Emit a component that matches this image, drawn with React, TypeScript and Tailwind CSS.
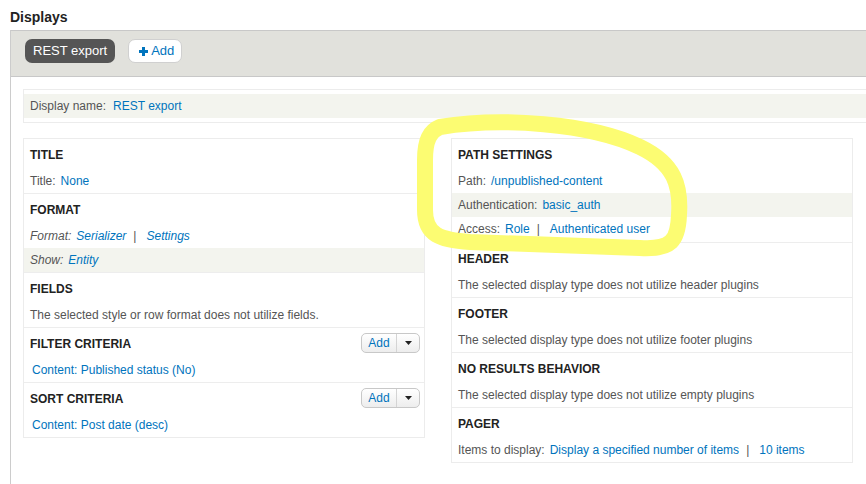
import React from 'react';

const font = { fontFamily: '"Liberation Sans", Arial, sans-serif' };

const Label = ({ children, italic }: { children: React.ReactNode; italic?: boolean }) => (
  <span className={`text-[#555] ${italic ? 'italic' : ''}`}>{children}</span>
);

const Link = ({ children, className = '' }: { children: React.ReactNode; className?: string }) => (
  <a className={`text-[#0074bd] ${className}`}>{children}</a>
);

const Sep = () => <span className="ml-[7px] text-[#555]">|</span>;

const DropButton = () => (
  <div className="flex h-[20px] items-stretch rounded-[5px] border border-[#c8c8c8] bg-gradient-to-b from-white to-[#ededed] text-[12px]">
    <span className="flex w-[34px] items-center justify-center text-[#0074bd]">Add</span>
    <span className="flex w-[23px] items-center justify-center border-l border-[#d4d4d4]">
      <svg width="7" height="4" viewBox="0 0 7 4">
        <path d="M0 0 L7 0 L3.5 4 Z" fill="#222" />
      </svg>
    </span>
  </div>
);

const Section = ({
  title,
  action,
  first,
  extraPad,
  children,
}: {
  title: string;
  action?: React.ReactNode;
  first?: boolean;
  extraPad?: boolean;
  children: React.ReactNode;
}) => (
  <div className={`${first ? '' : 'border-t border-[#ededed]'} ${extraPad ? 'pb-[1px]' : ''}`}>
    <div className="flex h-[30px] items-center justify-between pl-[6px] pr-[4px] pt-[2px]">
      <h3 className="text-[12px] font-bold uppercase leading-[14px] text-[#222]">{title}</h3>
      {action && <div className="-mt-[2px]">{action}</div>}
    </div>
    {children}
  </div>
);

const Row = ({ children, alt, indent }: { children: React.ReactNode; alt?: boolean; indent?: boolean }) => (
  <div
    className={`flex h-[24px] items-center whitespace-nowrap text-[12px] ${indent ? 'pl-[8px]' : 'pl-[6px]'} ${
      alt ? 'bg-[#f3f4ee]' : ''
    }`}
  >
    {children}
  </div>
);

const App = () => {
  return (
    <div className="relative h-[484px] w-[866px] overflow-hidden bg-white" style={font}>
      <h2 className="h-[30px] pl-[10px] pt-[9px] text-[14px] font-bold leading-[17px] text-[#222]">Displays</h2>

      <div className="ml-[10px] h-[454px] w-[1300px] border-l border-[#ccc]">
        {/* display tabs */}
        <div className="flex h-[47px] items-start gap-[13px] border-y border-[#c8c8c8] bg-[#e1e1dc] pl-[14px] pt-[8px]">
          <button className="h-[24px] rounded-[7px] bg-[#555] px-[8px] text-[13px] text-white">REST export</button>
          <button className="flex h-[24px] items-center gap-[3px] rounded-[7px] border border-[#d0d0d0] bg-white pl-[10px] pr-[7px] text-[13px] text-[#0074bd]">
            <svg width="9" height="9" viewBox="0 0 9 9">
              <path d="M3 0 H6 V3 H9 V6 H6 V9 H3 V6 H0 V3 H3 Z" fill="#0074bd" />
            </svg>
            Add
          </button>
        </div>

        <div className="pl-[12px] pt-[12px]">
          {/* display name */}
          <div className="border border-[#ececec] py-[4px]">
            <div className="flex h-[24px] items-center bg-[#f3f4ee] pl-[6px] text-[12px]">
              <Label>Display name:</Label>
              <Link className="ml-[7px]">REST export</Link>
            </div>
          </div>

          <div className="mt-[15px] flex items-start gap-[26px]">
            {/* left column */}
            <div className="w-[402px] border border-[#ececec]">
              <Section title="Title" first>
                <Row>
                  <Label>Title:</Label>
                  <Link className="ml-[5px]">None</Link>
                </Row>
              </Section>
              <Section title="Format">
                <Row>
                  <Label italic>Format:</Label>
                  <Link className="ml-[5px] italic">Serializer</Link>
                  <Sep />
                  <Link className="ml-[10px] italic">Settings</Link>
                </Row>
                <Row alt>
                  <Label italic>Show:</Label>
                  <Link className="ml-[5px] italic">Entity</Link>
                </Row>
              </Section>
              <Section title="Fields">
                <Row>
                  <Label>The selected style or row format does not utilize fields.</Label>
                </Row>
              </Section>
              <Section title="Filter criteria" action={<DropButton />}>
                <Row indent>
                  <Link>Content: Published status (No)</Link>
                </Row>
              </Section>
              <Section title="Sort criteria" action={<DropButton />}>
                <Row indent>
                  <Link>Content: Post date (desc)</Link>
                </Row>
              </Section>
            </div>

            {/* right column */}
            <div className="w-[402px] border border-[#ececec]">
              <Section title="Path settings" first extraPad>
                <Row>
                  <Label>Path:</Label>
                  <Link className="ml-[5px]">/unpublished-content</Link>
                </Row>
                <Row alt>
                  <Label>Authentication:</Label>
                  <Link className="ml-[5px]">basic_auth</Link>
                </Row>
                <Row>
                  <Label>Access:</Label>
                  <Link className="ml-[5px]">Role</Link>
                  <Sep />
                  <Link className="ml-[10px]">Authenticated user</Link>
                </Row>
              </Section>
              <Section title="Header">
                <Row>
                  <Label>The selected display type does not utilize header plugins</Label>
                </Row>
              </Section>
              <Section title="Footer">
                <Row>
                  <Label>The selected display type does not utilize footer plugins</Label>
                </Row>
              </Section>
              <Section title="No results behavior">
                <Row>
                  <Label>The selected display type does not utilize empty plugins</Label>
                </Row>
              </Section>
              <Section title="Pager">
                <Row>
                  <Label>Items to display:</Label>
                  <Link className="ml-[5px]">Display a specified number of items</Link>
                  <Sep />
                  <Link className="ml-[10px]">10 items</Link>
                </Row>
              </Section>
            </div>
          </div>
        </div>
      </div>

      {/* hand-drawn highlight annotation */}
      <svg className="pointer-events-none absolute left-0 top-0" width="866" height="484" viewBox="0 0 866 484">
        <path
          d="M440 127 C500 117 590 123 640 147 C675 164 681 186 679 215 C678 240 672 250 640 248 L470 242 C440 240 425 235 425 210 L425 160 C425 140 430 131 440 127 Z"
          fill="none"
          stroke="#fcfc72"
          strokeWidth="16"
          strokeLinejoin="round"
        />
      </svg>
    </div>
  );
};

export default App;
